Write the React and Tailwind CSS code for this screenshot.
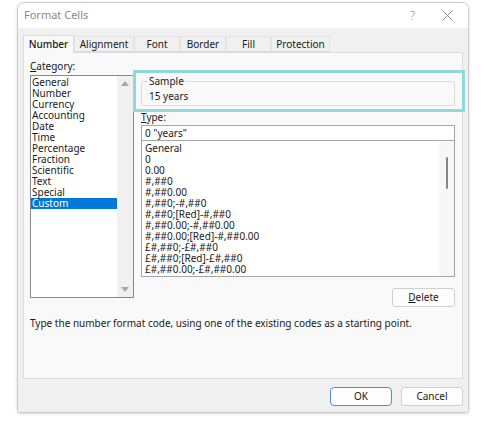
import { useState } from "react";

const CATEGORIES = [
  "General",
  "Number",
  "Currency",
  "Accounting",
  "Date",
  "Time",
  "Percentage",
  "Fraction",
  "Scientific",
  "Text",
  "Special",
  "Custom",
];

const FORMATS = [
  "General",
  "0",
  "0.00",
  "#,##0",
  "#,##0.00",
  "#,##0;-#,##0",
  "#,##0;[Red]-#,##0",
  "#,##0.00;-#,##0.00",
  "#,##0.00;[Red]-#,##0.00",
  "£#,##0;-£#,##0",
  "£#,##0;[Red]-£#,##0",
  "£#,##0.00;-£#,##0.00",
];

const TABS = [
  { label: "Number", w: "w-[51px]" },
  { label: "Alignment", w: "w-[60px]" },
  { label: "Font", w: "w-[46px]" },
  { label: "Border", w: "w-[46px]" },
  { label: "Fill", w: "w-[45px]" },
  { label: "Protection", w: "w-[59px]" },
];

function Triangle({ up }) {
  return (
    <svg width="8" height="5" viewBox="0 0 8 5" className="fill-[#a8a8a8]">
      {up ? <path d="M4 0 L8 5 L0 5 Z" /> : <path d="M0 0 L8 0 L4 5 Z" />}
    </svg>
  );
}

export default function App() {
  const [category, setCategory] = useState("Custom");
  const [tab, setTab] = useState("Number");

  return (
    <div
      className="w-[484px] h-[422px] bg-white pt-[2px] pl-[17px] text-[10px] text-[#1a1a1a]"
      style={{ fontFamily: '"Noto Sans", "Liberation Sans", sans-serif' }}
    >
      <div className="relative w-[452px] h-[411px] flex flex-col border border-[#c9c9c9] rounded-t-[7px] rounded-b-[3px] overflow-hidden shadow-[0_1px_3px_rgba(0,0,0,0.15)]">
        {/* Title bar */}
        <div className="h-[25px] bg-white flex items-center pl-[6px] pr-[15px] shrink-0">
          <span className="text-[11px] text-[#8a8a8a]">Format Cells</span>
          <span className="ml-auto text-[12px] text-[#888] font-light">?</span>
          <svg width="11" height="11" viewBox="0 0 11 11" className="ml-[27px] stroke-[#8a8a8a]">
            <path d="M0.5 0.5 L10.5 10.5 M10.5 0.5 L0.5 10.5" strokeWidth="1" />
          </svg>
        </div>

        {/* Body */}
        <div className="flex-1 bg-[#f0f0f0] px-[5px] pt-[7px] flex flex-col">
          {/* Tabs */}
          <div className="flex h-[17px] items-end relative z-10">
            {TABS.map((t) => (
              <button
                key={t.label}
                onClick={() => setTab(t.label)}
                className={`${t.w} flex items-center justify-center border-t border-l border-r ${
                  tab === t.label
                    ? "h-[18px] bg-[#f9f9f9] border-[#dcdcdc] -mb-px font-medium text-[#1a1a1a]"
                    : "h-[16px] bg-[#f0f0f0] border-[#e3e3e3] border-b border-b-[#dcdcdc] text-[#1a1a1a]"
                }`}
              >
                {t.label}
              </button>
            ))}
          </div>

          {/* Panel */}
          <div className="h-[327px] bg-[#f9f9f9] border border-[#dcdcdc] flex flex-col pl-[6px] pr-[5px]">
            <div className="flex gap-[7px]">
              {/* Left column */}
              <div className="w-[104px] flex flex-col">
                <div className="mt-[7px] h-[13px] leading-[13px]">
                  <span className="underline underline-offset-1">C</span>ategory:
                </div>
                <div className="mt-[2px] h-[223px] bg-white border border-[#828790] flex">
                  <div className="flex-1 pt-px">
                    {CATEGORIES.map((c) => (
                      <div
                        key={c}
                        onClick={() => setCategory(c)}
                        className={`h-[11px] leading-[11px] pl-[1px] ${
                          category === c ? "bg-[#0078d7] text-white" : ""
                        }`}
                      >
                        {c}
                      </div>
                    ))}
                  </div>
                  <div className="w-[16px] bg-[#f0f0f0] flex flex-col items-center justify-between py-[5px]">
                    <Triangle up />
                    <Triangle />
                  </div>
                </div>
              </div>

              {/* Right column */}
              <div className="w-[314px] flex flex-col">
                <div className="relative mt-[23px]">
                  <fieldset className="h-[30px] border border-[#dcdcdc] rounded-[2px] px-[6px]">
                    <legend className="px-px text-[#1a1a1a] leading-[10px]">Sample</legend>
                    <div className="pl-[1px] pt-[4px] leading-[12px]">15 years</div>
                  </fieldset>
                  {/* annotation highlight */}
                  <div className="absolute -left-[8px] -right-[10px] -top-[6px] -bottom-[6px] border-[3px] border-[#8fd9da] pointer-events-none" />
                </div>
                <div className="mt-[5px] h-[13px] leading-[13px]">
                  <span className="underline underline-offset-1">T</span>ype:
                </div>
                <div className="mt-px h-[16px] bg-white border border-[#a6a6a6] px-[3px] leading-[14px]">
                  0 "years"
                </div>
                <div className="h-[136px] bg-white border border-[#a6a6a6] border-t-0 flex">
                  <div className="flex-1 pt-[2px] pl-[3px]">
                    {FORMATS.map((f) => (
                      <div key={f} className="h-[11px] leading-[11px] whitespace-nowrap">
                        {f}
                      </div>
                    ))}
                  </div>
                  <div className="w-[15px] bg-[#f7f7f7] flex justify-center pt-[16px]">
                    <div className="w-[2px] h-[32px] rounded-full bg-[#858585]" />
                  </div>
                </div>
                <div className="flex justify-end mt-[11px]">
                  <button className="w-[63px] h-[19px] bg-[#fdfdfd] border border-[#d0d0d0] rounded-[3px] text-[#1a1a1a]">
                    <span className="underline underline-offset-1">D</span>elete
                  </button>
                </div>
              </div>
            </div>
            <div className="mt-[10px] leading-[13px]">
              Type the number format code, using one of the existing codes as a starting point.
            </div>
          </div>

          {/* Buttons */}
          <div className="flex justify-end gap-[9px] mt-[8px]">
            <button className="w-[62px] h-[19px] bg-[#fdfdfd] border-[1.5px] border-[#4b8fd6] rounded-[4px] text-[#1a1a1a]">
              OK
            </button>
            <button className="w-[62px] h-[19px] bg-[#fdfdfd] border border-[#d0d0d0] rounded-[3px] text-[#1a1a1a]">
              Cancel
            </button>
          </div>
        </div>
      </div>
    </div>
  );
}
